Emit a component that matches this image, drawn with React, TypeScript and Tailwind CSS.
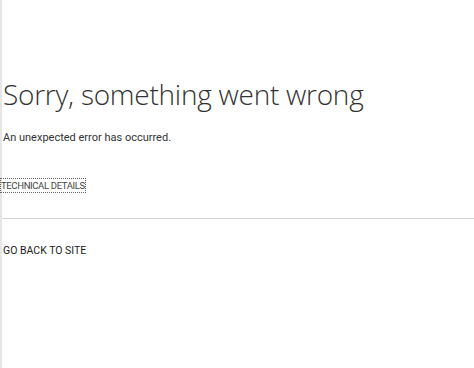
export default function App() {
  return (
    <div className="flex min-h-[368px] w-[474px] bg-white text-[#333333] [font-family:'Open_Sans',sans-serif]">
      <div className="w-[2px] shrink-0 bg-[#e6e6e6]" />
      <div className="flex flex-1 flex-col">
        <div className="pl-[1px] pt-[76px]">
          <h1 className="text-[28px] leading-[36px] font-light tracking-[-0.25px]">Sorry, something went wrong</h1>
          <p className="mt-[18px] text-[11px] leading-[16px] [font-family:Roboto,sans-serif]">An unexpected error has occurred.</p>
        </div>
        <div className="mt-[25px] -ml-[2px]">
          <button className="border border-dotted border-[#666666] px-0 py-[1px] text-[9.5px] leading-[11px] tracking-[-0.35px] text-[#444444] [font-family:Roboto,sans-serif]">
            TECHNICAL DETAILS
          </button>
        </div>
        <div className="mt-[23px] h-px bg-[#d4d4d4]" />
        <a className="mt-[25px] pl-[1px] text-[10.5px] leading-[14px] text-[#222222] [font-family:Roboto,sans-serif]">GO BACK TO SITE</a>
      </div>
    </div>
  );
}
